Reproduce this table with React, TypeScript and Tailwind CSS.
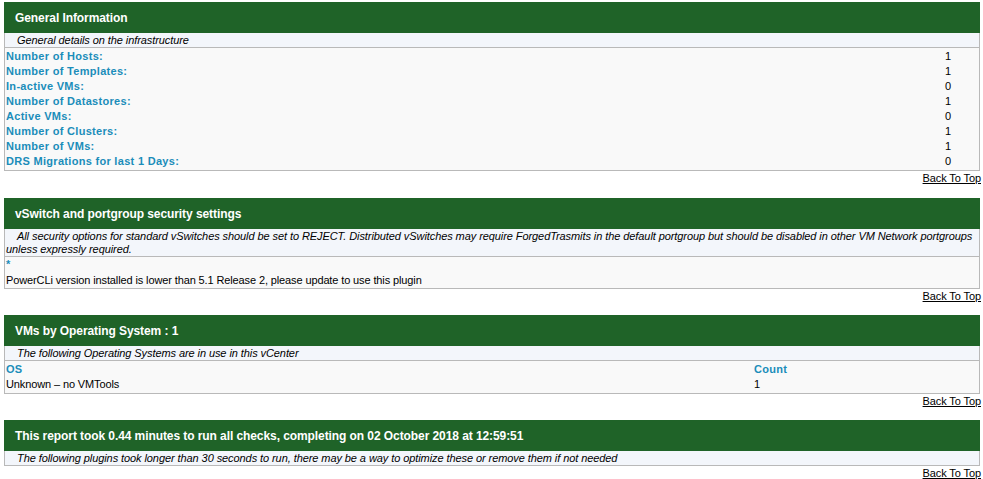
import React from "react";

const font = { fontFamily: "Tahoma, 'Liberation Sans', Arial, sans-serif" };

function Header({ children }: { children: React.ReactNode }) {
  return (
    <div className="h-[31px] bg-[#1f6328] flex items-center pl-[11px] text-white font-bold text-[12px] tracking-[-0.08px]">
      {children}
    </div>
  );
}

function Desc({ children }: { children: React.ReactNode }) {
  return (
    <div className="bg-[#f3f6fb] border-x border-b border-[#b9b9b9] italic text-[11px] leading-[13px] tracking-[-0.08px] text-black pl-px indent-[11px] pt-px">
      {children}
    </div>
  );
}

function BackToTop() {
  return (
    <div className="flex justify-end h-[15px] text-[11px] leading-[15px] text-black tracking-[-0.1px]">
      <span className="underline mr-[-1px]">Back To Top</span>
    </div>
  );
}

const rows: [string, string][] = [
  ["Number of Hosts:", "1"],
  ["Number of Templates:", "1"],
  ["In-active VMs:", "0"],
  ["Number of Datastores:", "1"],
  ["Active VMs:", "0"],
  ["Number of Clusters:", "1"],
  ["Number of VMs:", "1"],
  ["DRS Migrations for last 1 Days:", "0"],
];

export default function App() {
  return (
    <div className="bg-white w-[983px] h-[479px] overflow-hidden pt-[2px] pl-[4px] pr-[3px]" style={font}>
      {/* Section 1 */}
      <div>
        <Header>General Information</Header>
        <div className="bg-[#f3f6fb] border-x border-b border-[#b9b9b9] italic text-[11px] leading-[13px] tracking-[-0.08px] text-black pl-[12px] pt-px">
          General details on the infrastructure
        </div>
        <div className="bg-[#f9f9f9] border-x border-b border-[#b9b9b9] py-[1px]">
          {rows.map(([l, v]) => (
            <div key={l} className="flex h-[15px] items-center text-[11px]">
              <div className="w-[940px] pl-px font-bold tracking-[0.3px] text-[#1b8dba]">{l}</div>
              <div className="text-black">{v}</div>
            </div>
          ))}
        </div>
        <BackToTop />
      </div>

      {/* Section 2 */}
      <div className="mt-[12px]">
        <Header>vSwitch and portgroup security settings</Header>
        <Desc>
          All security options for standard vSwitches should be set to REJECT. Distributed vSwitches may require ForgedTrasmits in the default portgroup but should be disabled in other VM Network portgroups unless expressly required.
        </Desc>
        <div className="bg-[#f9f9f9] border-x border-b border-[#b9b9b9]">
          <div className="h-[15px] flex items-center pl-px text-[11px] font-bold text-[#1b8dba]">*</div>
          <div className="h-[16px] flex items-center pl-px text-[11px] tracking-[-0.12px] text-black">
            PowerCLi version installed is lower than 5.1 Release 2, please update to use this plugin
          </div>
        </div>
        <BackToTop />
      </div>

      {/* Section 3 */}
      <div className="mt-[11px]">
        <Header>VMs by Operating System : 1</Header>
        <Desc>The following Operating Systems are in use in this vCenter</Desc>
        <div className="bg-[#f9f9f9] border-x border-b border-[#b9b9b9] pb-[1px]">
          <div className="flex h-[16px] items-center text-[11px] font-bold tracking-[0.3px] text-[#1b8dba]">
            <div className="w-[749px] pl-px">OS</div>
            <div>Count</div>
          </div>
          <div className="flex h-[15px] items-center text-[11px] text-black tracking-[-0.12px]">
            <div className="w-[749px] pl-px">Unknown – no VMTools</div>
            <div>1</div>
          </div>
        </div>
        <BackToTop />
      </div>

      {/* Section 4 */}
      <div className="mt-[11px]">
        <Header>This report took 0.44 minutes to run all checks, completing on 02 October 2018 at 12:59:51</Header>
        <Desc>
          The following plugins took longer than 30 seconds to run, there may be a way to optimize these or remove them if not needed
        </Desc>
        <BackToTop />
      </div>
    </div>
  );
}
